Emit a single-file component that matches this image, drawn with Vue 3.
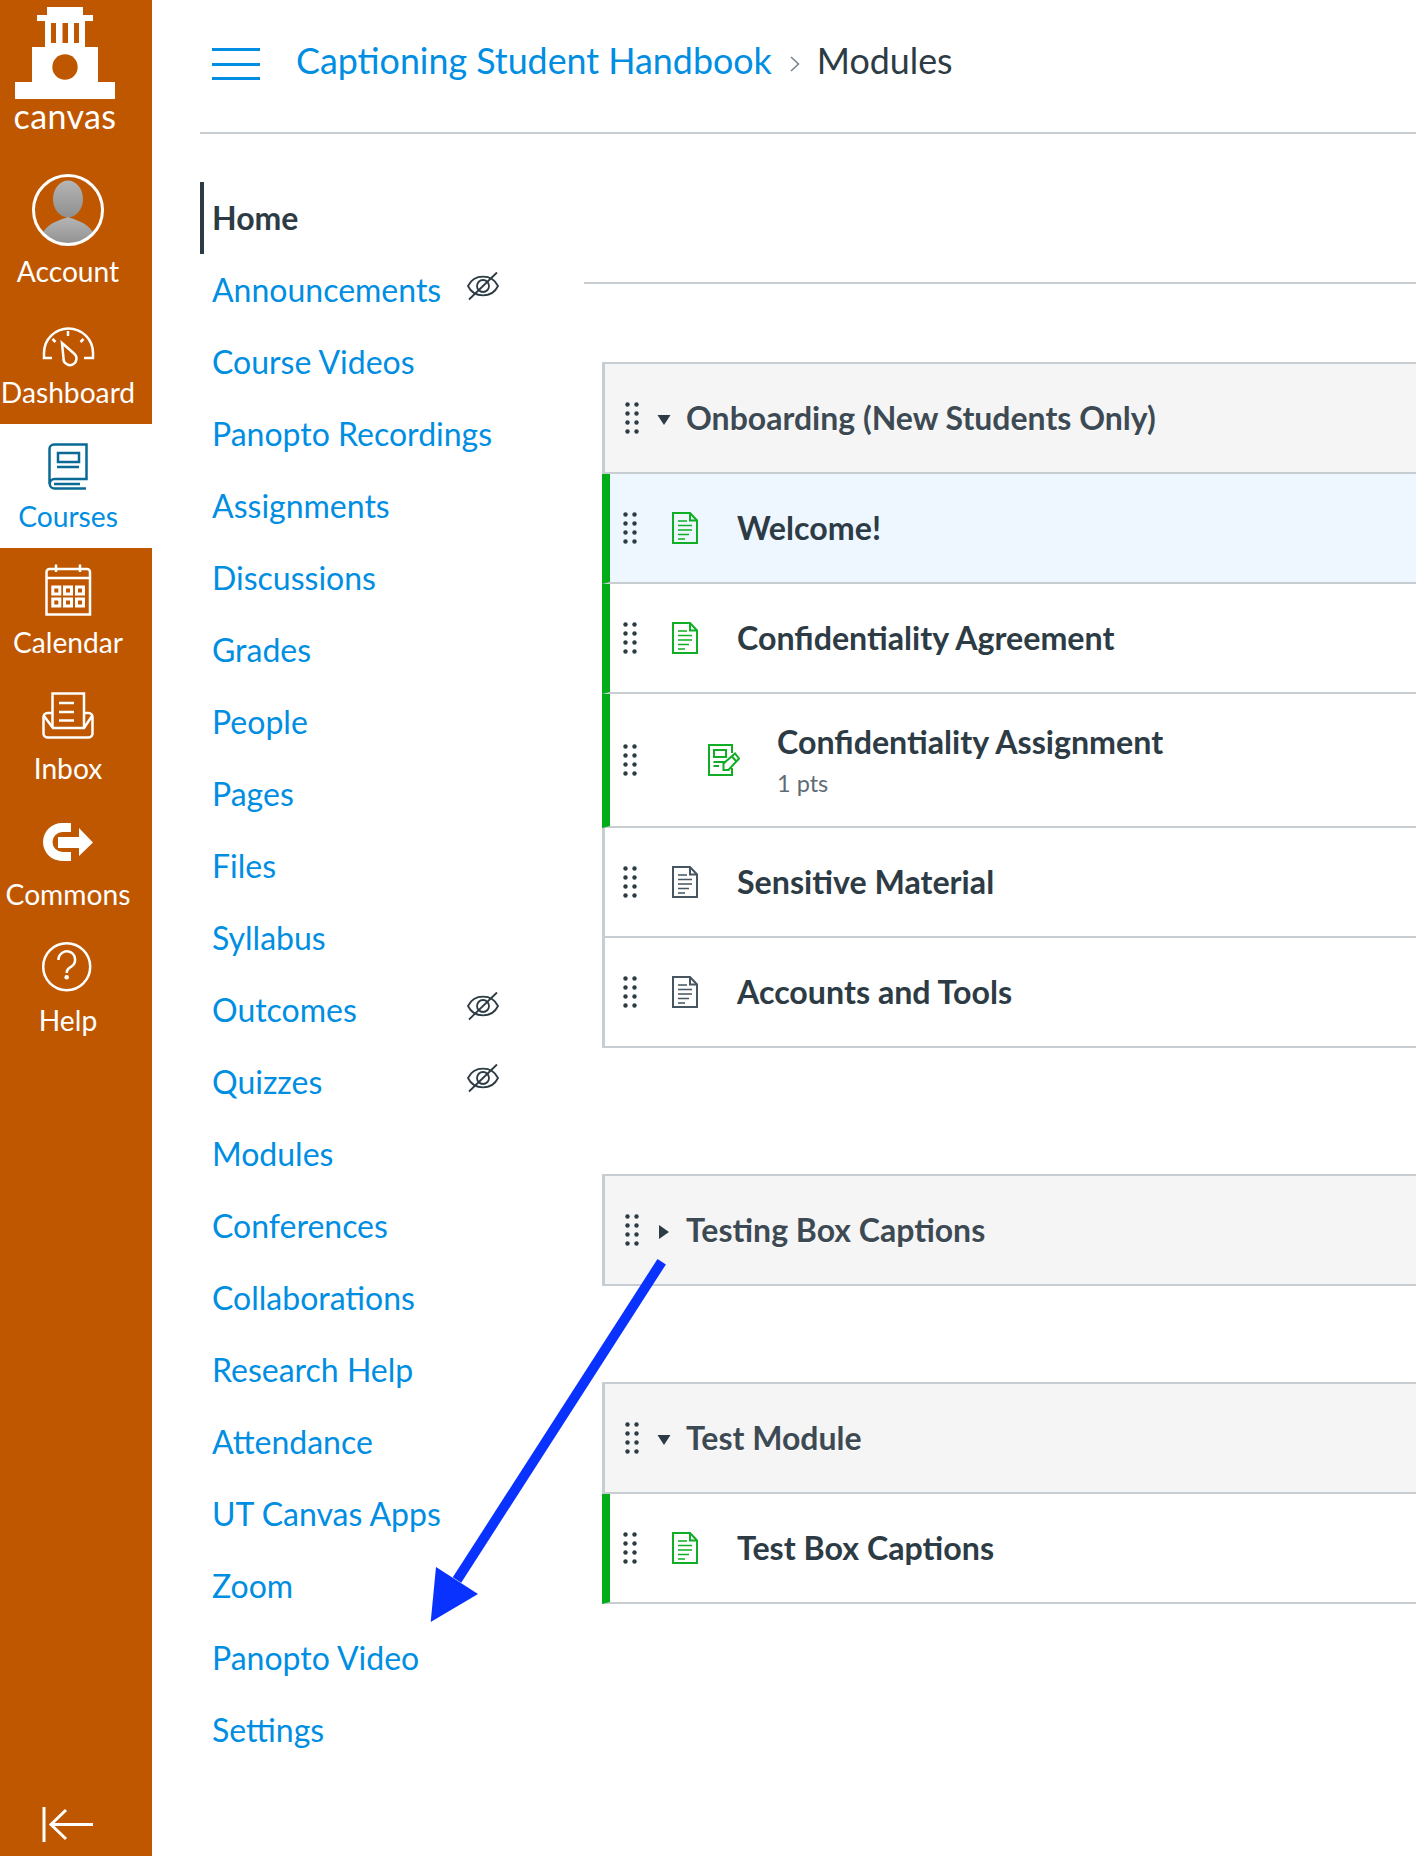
<script setup>
const navItems = [
  { label: 'Home', active: true },
  { label: 'Announcements', hidden: true },
  { label: 'Course Videos' },
  { label: 'Panopto Recordings' },
  { label: 'Assignments' },
  { label: 'Discussions' },
  { label: 'Grades' },
  { label: 'People' },
  { label: 'Pages' },
  { label: 'Files' },
  { label: 'Syllabus' },
  { label: 'Outcomes', hidden: true },
  { label: 'Quizzes', hidden: true },
  { label: 'Modules' },
  { label: 'Conferences' },
  { label: 'Collaborations' },
  { label: 'Research Help' },
  { label: 'Attendance' },
  { label: 'UT Canvas Apps' },
  { label: 'Zoom' },
  { label: 'Panopto Video' },
  { label: 'Settings' }
]

const modules = [
  {
    title: 'Onboarding (New Students Only)',
    open: true,
    cls: 'first',
    rows: [
      { title: 'Welcome!', pub: true, type: 'page', active: true },
      { title: 'Confidentiality Agreement', pub: true, type: 'page' },
      { title: 'Confidentiality Assignment', pub: true, type: 'assign', meta: '1 pts' },
      { title: 'Sensitive Material', type: 'page' },
      { title: 'Accounts and Tools', type: 'page' }
    ]
  },
  { title: 'Testing Box Captions', open: false, cls: 'second', rows: [] },
  {
    title: 'Test Module',
    open: true,
    cls: 'third',
    rows: [{ title: 'Test Box Captions', pub: true, type: 'page' }]
  }
]

const dots = [4, 13, 22, 31]
</script>

<template>
  <div class="app">
    <aside class="sidebar">
      <div class="logo">
        <svg class="tower" viewBox="0 0 130 100" width="130" height="100">
          <path fill="#fff" d="M47 7H83V15H93V21H85V47H98V82H115V99H15V82H32V47H45V21H37V15H47Z" />
          <path fill="#bf5700" d="M51 23H56V43H51ZM62.500 23H68V43H62.500ZM74 23H79V43H74Z" />
          <circle cx="65" cy="67" r="12.700" fill="#bf5700" />
        </svg>
        <span class="logo-word">canvas</span>
      </div>

      <a class="item account">
        <svg class="ico-big" viewBox="32 174 72 72">
          <defs>
            <clipPath id="av"><circle cx="68" cy="210" r="34" /></clipPath>
            <linearGradient id="avg" x1="0" y1="0" x2="0" y2="1">
              <stop offset="0" stop-color="#b5b5b5" />
              <stop offset="1" stop-color="#8f8f8f" />
            </linearGradient>
          </defs>
          <circle cx="68" cy="210" r="34" fill="#bf5700" />
          <g clip-path="url(#av)" fill="url(#avg)">
            <ellipse cx="68" cy="199" rx="15" ry="18.500" />
            <path d="M40 246C40 226 54 222 68 217C82 222 96 226 96 246Z" />
          </g>
          <circle cx="68" cy="210" r="34.500" fill="none" stroke="#fff" stroke-width="3" />
        </svg>
        <span class="label">Account</span>
      </a>

      <a class="item dash">
        <svg class="ico" viewBox="32 314 72 60" fill="none" stroke="#fff" stroke-width="2.500">
          <path d="M52 360H44V355A24.500 24.500 0 0 1 93 355V360H84" />
          <path d="M68 333V338M52.500 341L55.500 344M83.500 341L80.500 344" />
          <path d="M62 345L74 355.500A6.500 6.500 0 1 1 63.500 360Z" />
        </svg>
        <span class="label">Dashboard</span>
      </a>

      <a class="item courses">
        <svg class="ico" viewBox="32 435 72 60" fill="none" stroke="#0a6a95" stroke-width="2.500">
          <path d="M49.500 483V448A4.500 4.500 0 0 1 54 443.500H86.500V478H54.500A4.700 4.700 0 0 0 54.500 487.500H86" />
          <path d="M54 483H80" />
          <rect x="58" y="452" width="21" height="9" />
          <path d="M57 466H79" />
        </svg>
        <span class="label">Courses</span>
      </a>

      <a class="item">
        <svg class="ico" viewBox="32 562 72 60" fill="none" stroke="#fff" stroke-width="2.500">
          <path d="M46.500 614.500V572A3 3 0 0 1 49.500 569H87A3 3 0 0 1 90 572V614.500Z" />
          <path d="M46.500 578H90M56 564.500V572M80 564.500V572" />
          <g stroke-width="3">
            <rect x="52.800" y="587" width="7" height="7" />
            <rect x="64.500" y="587" width="7" height="7" />
            <rect x="76.500" y="587" width="7" height="7" />
            <rect x="52.800" y="599" width="7" height="7" />
            <rect x="64.500" y="599" width="7" height="7" />
            <rect x="76.500" y="599" width="7" height="7" />
          </g>
        </svg>
        <span class="label">Calendar</span>
      </a>

      <a class="item">
        <svg class="ico" viewBox="32 688 72 60" fill="none" stroke="#fff" stroke-width="2.500">
          <path d="M52.500 728V693.500H84V728" />
          <path d="M59 703H74M59 712H74M59 720.500H74" />
          <path d="M52 713H47.500A4 4 0 0 0 43.500 717V733A4 4 0 0 0 47.500 737.500H88.500A4 4 0 0 0 92.500 733V717A4 4 0 0 0 88.500 713H84" />
          <path d="M44 716L53 728H84L92 716" />
        </svg>
        <span class="label">Inbox</span>
      </a>

      <a class="item">
        <svg class="ico" viewBox="32 814 72 60" fill="#fff">
          <path d="M71 823V832H62.500A10 10 0 0 0 62.500 852H71V861H62A19 19 0 0 1 62 823Z" />
          <path d="M58 837H79V828L93 842.500L79 856V848H58Z" />
        </svg>
        <span class="label">Commons</span>
      </a>

      <a class="item">
        <svg class="ico" viewBox="32 940 72 60" fill="none" stroke="#fff" stroke-width="2.500">
          <circle cx="66.700" cy="966.700" r="23.500" />
          <path d="M58.500 960A8.300 8.300 0 1 1 71.500 966.500C68.500 968.500 66.700 969.500 66.700 973" />
          <circle cx="66.700" cy="977.300" r="2.300" fill="#fff" stroke="none" />
        </svg>
        <span class="label">Help</span>
      </a>

      <svg class="collapse" viewBox="40 1804 56 42" width="56" height="42" fill="none" stroke="#fff" stroke-width="3">
        <path d="M44 1807V1842M93 1824.500H51M66 1810L51 1824.500L66 1839" />
      </svg>
    </aside>

    <main class="main">
      <header class="crumbs">
        <button class="burger" aria-label="menu"><i></i><i></i><i></i></button>
        <a class="crumb-link">Captioning Student Handbook</a>
        <svg class="chev" viewBox="0 0 12 18" width="12" height="18" fill="none" stroke="#73818c" stroke-width="1.500">
          <path d="M2 2L9.500 9L2 16" />
        </svg>
        <span class="crumb-current">Modules</span>
      </header>

      <div class="body">
        <nav class="course-nav">
          <a v-for="n in navItems" :key="n.label" class="nav-item" :class="{ active: n.active }">
            <span class="nav-text">{{ n.label }}</span>
            <svg v-if="n.hidden" class="eye" viewBox="0 0 34 30" width="34" height="30" fill="none" stroke="#2d3b45" stroke-width="1.800">
              <path d="M2 15C8 2.500 26 2.500 32 15C26 27.500 8 27.500 2 15Z" />
              <circle cx="17" cy="15" r="6" />
              <path d="M3 28.500L31 1.500" />
            </svg>
          </a>
        </nav>

        <section class="content">
          <div class="rule"></div>
          <div v-for="m in modules" :key="m.title" class="module" :class="m.cls">
            <div class="mod-head">
              <svg class="drag" viewBox="0 0 14 32" width="14" height="32" fill="#2d3b45">
                <template v-for="d in dots" :key="d">
                  <circle cx="2.500" :cy="d - 1.500" r="2.200" />
                  <circle cx="11.500" :cy="d - 1.500" r="2.200" />
                </template>
              </svg>
              <svg class="caret" viewBox="0 0 14 14" width="14" height="14" fill="#2d3b45">
                <path v-if="m.open" d="M0.500 2H13.500L7 12Z" />
                <path v-else d="M2 0L12 7L2 14Z" />
              </svg>
              <span class="mod-title">{{ m.title }}</span>
            </div>
            <div
              v-for="r in m.rows"
              :key="r.title"
              class="row"
              :class="{ pub: r.pub, hl: r.active, tall: r.meta }"
            >
              <svg class="drag" viewBox="0 0 14 32" width="14" height="32" fill="#2d3b45">
                <template v-for="d in dots" :key="d">
                  <circle cx="2.500" :cy="d - 1.500" r="2.200" />
                  <circle cx="11.500" :cy="d - 1.500" r="2.200" />
                </template>
              </svg>
              <svg
                v-if="r.type === 'page'"
                class="page"
                viewBox="0 0 26 32"
                width="26"
                height="32"
                fill="none"
                :stroke="r.pub ? '#0fae25' : '#46555f'"
                stroke-width="2"
              >
                <path d="M1 1H18L25 8.500V31H1Z" />
                <path d="M18 1V8.500H25" />
                <path d="M6 9H15M6 13.500H20M6 18H20M6 22.500H17M6 27H13" stroke-width="1.700" />
              </svg>
              <svg
                v-else
                class="assign"
                viewBox="0 0 32 32"
                width="32"
                height="32"
                fill="none"
                stroke="#0fae25"
                stroke-width="2"
              >
                <path d="M24 9V1H1V31H24V24" />
                <rect x="6" y="6" width="12" height="7" />
                <path d="M5.500 18H17M5.500 22H11" />
                <path d="M15.500 26V19.500L27 9.500L31 14.500L20.500 26Z" />
                <path d="M24 12.500L28 17" />
              </svg>
              <div class="row-text">
                <div class="row-title">{{ r.title }}</div>
                <div v-if="r.meta" class="row-meta">{{ r.meta }}</div>
              </div>
            </div>
          </div>
        </section>
      </div>
    </main>

    <svg class="arrow" viewBox="0 0 1416 1856" width="1416" height="1856">
      <path d="M661.700 1261.700L457 1580" stroke="#0a32ff" stroke-width="10" fill="none" />
      <path d="M436 1567L478 1594L430.700 1622Z" fill="#0a32ff" />
    </svg>
  </div>
</template>

<style scoped>
.app {
  position: relative;
  display: flex;
  width: 1416px;
  height: 1856px;
  overflow: hidden;
  background: #fff;
  font-family: Lato, "Noto Sans", sans-serif;
  color: #2d3b45;
}
.sidebar {
  flex: 0 0 152px;
  height: 1856px;
  background: #bf5700;
  display: flex;
  flex-direction: column;
}
.logo {
  height: 136px;
  display: flex;
  flex-direction: column;
  align-items: flex-start;
  flex: none;
}
.tower {
  display: block;
  flex: none;
}
.logo-word {
  width: 130px;
  text-align: center;
  color: #fff;
  font-family: Lato, sans-serif;
  font-size: 34px;
  line-height: 36px;
  margin-top: -2px;
  letter-spacing: 0.4px;
}
.item {
  flex: none;
  height: 126px;
  box-sizing: border-box;
  padding: 0 16px 16px 0;
  display: flex;
  flex-direction: column;
  align-items: center;
  justify-content: flex-end;
  color: #fff;
}
.item.account {
  height: 167px;
}
.item.dash {
  height: 121px;
}
.item.courses {
  height: 124px;
  background: #fff;
  color: #008ee2;
}
.ico {
  width: 72px;
  height: 60px;
  margin-bottom: 4px;
  display: block;
  flex: none;
}
.ico-big {
  width: 72px;
  height: 72px;
  margin-bottom: 9px;
  display: block;
  flex: none;
}
.label {
  font-size: 28.200px;
  line-height: 32px;
  white-space: nowrap;
}
.collapse {
  margin-top: auto;
  margin-left: 40px;
  margin-bottom: 10px;
  display: block;
}
.main {
  flex: 0 0 1216px;
  margin-left: 48px;
  min-width: 0;
}
.crumbs {
  box-sizing: content-box;
  height: 128px;
  border-bottom: 2px solid #c7cdd1;
  display: flex;
  align-items: center;
  padding: 0 0 4px 12px;
}
.burger {
  width: 48px;
  height: 32px;
  padding: 0;
  border: 0;
  background: none;
  display: flex;
  flex-direction: column;
  justify-content: space-between;
  margin-right: 36px;
}
.burger i {
  display: block;
  height: 3px;
  background: #008ee2;
}
.crumb-link {
  font-size: 35.800px;
  line-height: 44px;
  color: #008ee2;
  margin-bottom: 6px;
}
.chev {
  margin: 0 16px 0 17px;
}
.crumb-current {
  font-size: 35.800px;
  line-height: 44px;
  color: #2d3b45;
  margin-bottom: 6px;
}
.body {
  display: flex;
}
.course-nav {
  flex: 0 0 384px;
  padding-top: 48px;
}
.nav-item {
  width: 300px;
  height: 72px;
  box-sizing: border-box;
  border-left: 4px solid transparent;
  padding-left: 8px;
  display: flex;
  align-items: center;
  justify-content: space-between;
  font-size: 32px;
  color: #008ee2;
  white-space: nowrap;
}
.nav-text {
  margin-bottom: 1px;
}
.nav-item.active {
  border-left-color: #2d3b45;
  color: #2d3b45;
  font-weight: 700;
}
.eye {
  margin-bottom: 8px;
}
.content {
  flex: 1;
  min-width: 0;
  padding-top: 148px;
}
.rule {
  height: 2px;
  background: #c7cdd1;
}
.module {
  margin-left: 18px;
}
.module.first {
  margin-top: 78px;
}
.module.second {
  margin-top: 126px;
}
.module.third {
  margin-top: 96px;
}
.mod-head {
  height: 108px;
  border: 2px solid #c7cdd1;
  border-left-width: 3px;
  border-right: 0;
  background: #f5f5f5;
  padding-left: 20px;
  display: flex;
  align-items: center;
}
.mod-head .drag {
  margin-right: 18px;
}
.caret {
  margin: 4px 15px 0 0;
}
.mod-title {
  font-size: 32px;
  font-weight: 700;
  color: #3d4a54;
  text-shadow: 0 1px 0 #fff;
  white-space: nowrap;
  margin-bottom: 2px;
}
.row {
  height: 108px;
  border-bottom: 2px solid #c7cdd1;
  border-left: 3px solid #c7cdd1;
  padding-left: 18px;
  display: flex;
  align-items: center;
}
.row.pub {
  border-left: 8px solid #00ac18;
  padding-left: 13px;
}
.row.hl {
  background: #eef7ff;
}
.row.tall {
  height: 132px;
}
.page {
  margin: 0 39px 0 35px;
  flex: none;
}
.assign {
  margin: 0 37px 0 71px;
  flex: none;
}
.row-title {
  font-size: 32.200px;
  line-height: 40px;
  font-weight: 700;
  white-space: nowrap;
}
.row-meta {
  font-size: 23.500px;
  line-height: 30px;
  margin-top: 6px;
  color: #5f6b75;
}
.arrow {
  position: absolute;
  left: 0;
  top: 0;
  pointer-events: none;
}
</style>

<style>
html,
body {
  margin: 0;
  padding: 0;
}
</style>
